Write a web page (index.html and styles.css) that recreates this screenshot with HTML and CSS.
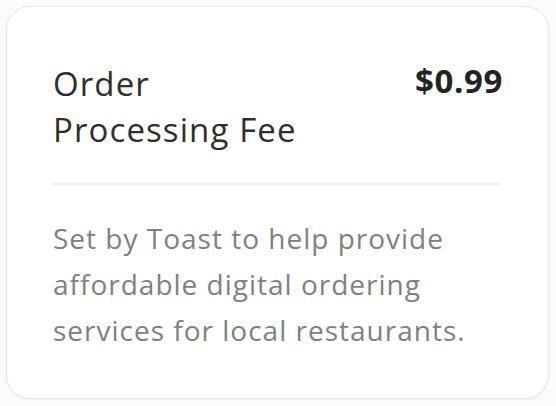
FILE: index.html
```html
<!DOCTYPE html>
<html>
<head>
<meta charset="utf-8">
<link rel="stylesheet" href="styles.css">
</head>
<body>
<div class="card">
  <div class="head">
    <div class="title">Order<br>Processing Fee</div>
    <div class="price">$0.99</div>
  </div>
  <div class="divider"></div>
  <p class="desc">Set by Toast to help provide<br>affordable digital ordering<br>services for local restaurants.</p>
</div>
</body>
</html>
```

FILE: styles.css
```css
html, body {
  margin: 0;
  padding: 0;
  background: #fbfbfb;
}
body {
  padding: 6px 7px 7px 6px;
  font-family: "Open Sans", "Noto Sans", sans-serif;
}
.card {
  box-sizing: border-box;
  width: 543px;
  height: 393px;
  background: #ffffff;
  border: 1px solid #e6e6e6;
  border-radius: 24px;
  box-shadow: 0 1px 3px rgba(0,0,0,0.05);
  padding: 54px 48px 0 45px;
}
.head {
  display: flex;
  justify-content: space-between;
  align-items: flex-start;
}
.title {
  padding-left: 1px;
  font-size: 33px;
  line-height: 46px;
  letter-spacing: 1.1px;
  color: #2e2e2e;
}
.price {
  font-size: 33px;
  line-height: 46px;
  font-weight: 700;
  letter-spacing: 0.6px;
  color: #232323;
  margin-top: -3px;
  margin-right: -3px;
}
.divider {
  height: 2px;
  background: #ececec;
  margin: 30px 0 0 0;
}
.desc {
  padding-left: 1px;
  margin: 30px 0 0 0;
  font-size: 28px;
  line-height: 46px;
  letter-spacing: 1px;
  color: #808080;
}
```
